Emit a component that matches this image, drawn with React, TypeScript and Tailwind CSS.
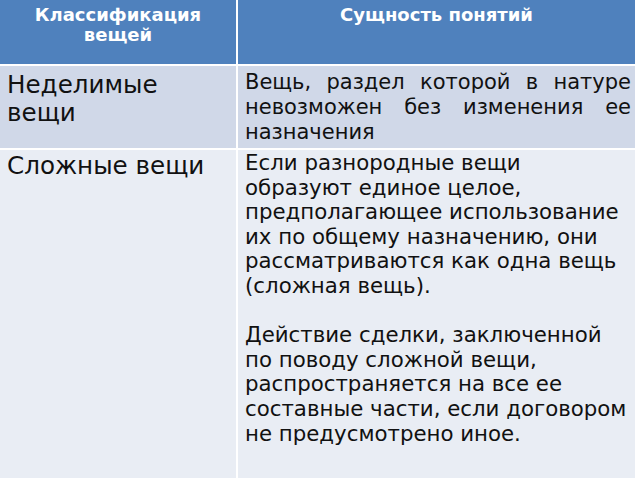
const justifiedLine = "block text-justify [text-align-last:justify]";

export default function App() {
  const font = { fontFamily: '"DejaVu Sans", sans-serif' };
  return (
    <div className="w-[640px] h-[480px] bg-white overflow-hidden" style={font}>
      <div className="grid grid-cols-[236px_397px] grid-rows-[64px_82px_328px] gap-[2px] h-[478px]">
        <div className="bg-[#4f81bd] text-white font-bold text-[18px] leading-[20px] text-center pt-[5px] px-2">
          Классификация
          <br />
          вещей
        </div>
        <div className="bg-[#4f81bd] text-white font-bold text-[18px] leading-[20px] text-center pt-[5px] px-2">
          Сущность понятий
        </div>
        <div className="bg-[#d0d8e8] text-[#111] text-[24.6px] leading-[28px] pl-[7px] pt-[5px]">
          Неделимые
          <br />
          вещи
        </div>
        <div className="bg-[#d0d8e8] text-[#111] text-[21px] leading-[25px] pl-[7px] pr-[4px] pt-[4px]">
          <span className={justifiedLine}>Вещь, раздел которой в натуре</span>
          <span className={justifiedLine}>невозможен без изменения ее</span>
          <span className="block">назначения</span>
        </div>
        <div className="bg-[#e9edf4] text-[#111] text-[24.6px] leading-[28px] pl-[7px] pt-[2px]">
          Сложные вещи
        </div>
        <div className="bg-[#e9edf4] text-[#111] text-[21.3px] leading-[24.6px] pl-[7px] pr-[4px] pt-[1px] whitespace-nowrap">
          <p>
            Если разнородные вещи
            <br />
            образуют единое целое,
            <br />
            предполагающее использование
            <br />
            их по общему назначению, они
            <br />
            рассматриваются как одна вещь
            <br />
            (сложная вещь).
          </p>
          <p className="mt-[24.6px]">
            Действие сделки, заключенной
            <br />
            по поводу сложной вещи,
            <br />
            распространяется на все ее
            <br />
            составные части, если договором
            <br />
            не предусмотрено иное.
          </p>
        </div>
      </div>
    </div>
  );
}
